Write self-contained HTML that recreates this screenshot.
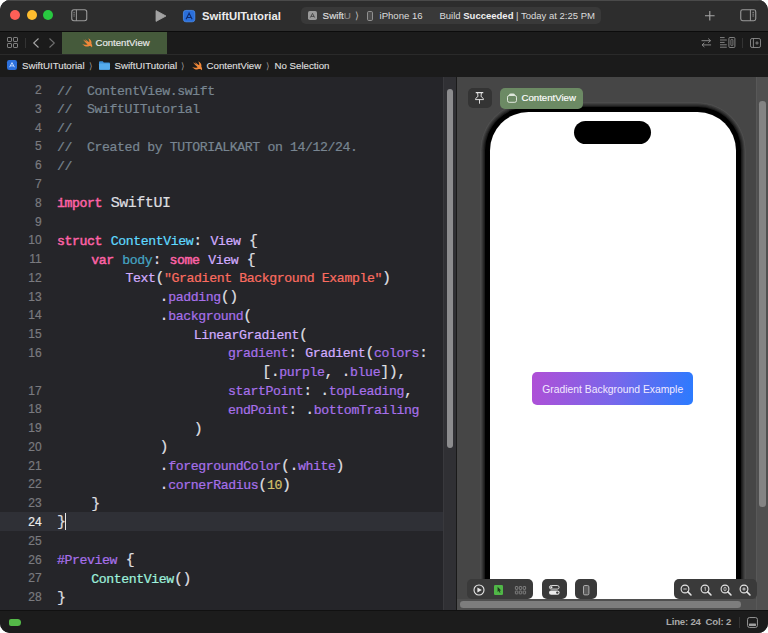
<!DOCTYPE html>
<html>
<head>
<meta charset="utf-8">
<title>Xcode</title>
<style>
html,body{margin:0;padding:0;background:#fff;}
body{width:768px;height:633px;overflow:hidden;position:relative;font-family:"Liberation Sans",sans-serif;}
#win{position:absolute;left:0;top:0;width:768px;height:633px;border-radius:10px;overflow:hidden;background:#1c1c1c;}
.abs{position:absolute;}
#titlebar{left:0;top:0;width:768px;height:31px;background:#2d2d2d;border-top:1px solid #4a4a4a;box-sizing:border-box;}
#tabbar{left:0;top:31px;width:768px;height:23px;background:#1b1b1b;border-top:1.4px solid #0c0c0c;box-sizing:border-box;}
#crumbs{left:0;top:54px;width:768px;height:23px;background:#1b1b1b;border-top:1px solid #2a2a2a;box-sizing:border-box;z-index:2;}
.t{z-index:3;}svg{z-index:3;}
#editor{left:0;top:77px;width:443px;height:533px;background:#252529;overflow:hidden;}
#scrolltrack{left:443px;top:77px;width:13px;height:533px;background:#303034;border-left:1px solid #39393d;box-sizing:border-box;}
#divider{left:456px;top:77px;width:1px;height:533px;background:#1a1a1a;}
#preview{left:457px;top:77px;width:311px;height:533px;background:#464646;overflow:hidden;}
#statusbar{left:0;top:610px;width:768px;height:23px;background:#1c1c1c;border-top:1px solid #111;box-sizing:border-box;}
.t{position:absolute;white-space:pre;color:#dcdcdc;font-size:10px;line-height:12px;}
.dot{position:absolute;width:10px;height:10px;border-radius:50%;top:10.4px;}
svg{position:absolute;overflow:visible;}
/* code */
.ln,.cl{position:absolute;white-space:pre;font-family:"Liberation Mono",monospace;font-size:15px;letter-spacing:-0.45px;line-height:19px;height:19px;color:#dfdfe0;}
.ln{left:0;margin-top:0.6px;width:41.7px;text-align:right;color:#7a7a7f;-webkit-text-stroke:0.2px #7a7a7f;font-family:"Liberation Sans",sans-serif;font-size:12px;letter-spacing:0;}
.ln.cur{color:#ececec;-webkit-text-stroke:0.2px #ececec;}
.cl{left:57px;margin-top:1px;}
.cl span{font-size:13.2px;letter-spacing:-0.4px;}
.cl,.cl span{-webkit-text-stroke:0.22px currentColor;}
.c{color:#788591}.cl .k{color:#fc62a5;-webkit-text-stroke:0.5px #fc62a5}.s{color:#fc6c60}.td{color:#5fd9ff}.od{color:#45a6c4}.oc{color:#d2acff}.of{color:#a770ea}.pt{color:#9ef1dd}.n{color:#d3c26c}
</style>
</head>
<body>
<div id="win">
  <!-- ===== title bar ===== -->
  <div id="titlebar" class="abs"></div>
  <div class="dot" style="left:10.4px;background:#fe5f57;"></div>
  <div class="dot" style="left:26.9px;background:#febc2e;"></div>
  <div class="dot" style="left:43.2px;background:#28c840;"></div>
  <!-- sidebar toggle -->
  <svg style="left:71px;top:9px" width="17" height="13" viewBox="0 0 17 13"><rect x="0.75" y="0.75" width="15" height="11" rx="2.2" fill="none" stroke="#9b9b9b" stroke-width="1.1"/><line x1="5.4" y1="0.8" x2="5.4" y2="11.8" stroke="#9b9b9b" stroke-width="1"/><line x1="2.4" y1="3.4" x2="3.8" y2="3.4" stroke="#9b9b9b" stroke-width="0.8"/><line x1="2.4" y1="5.2" x2="3.8" y2="5.2" stroke="#9b9b9b" stroke-width="0.8"/><line x1="2.4" y1="7" x2="3.8" y2="7" stroke="#9b9b9b" stroke-width="0.8"/></svg>
  <!-- play -->
  <svg style="left:155px;top:10px" width="12" height="12" viewBox="0 0 12 12"><path d="M1 0.6 L11 6 L1 11.4 Z" fill="#a2a2a2" stroke="#a2a2a2" stroke-width="0.8" stroke-linejoin="round"/></svg>
  <!-- app icon -->
  <svg style="left:183.4px;top:9.5px" width="12.2" height="12.2" viewBox="0 0 12 12"><rect x="0.4" y="0.4" width="11.2" height="11.2" rx="2.4" fill="#2a6fdc" stroke="#4b8ff0" stroke-width="0.8"/><path d="M3 9 L6 3.2 L9 9 M3.4 7.4 H8.6 M6 2.4 V3.6" fill="none" stroke="#0e2c6e" stroke-width="1.1"/></svg>
  <div class="t" style="left:202px;top:10px;font-size:11.3px;font-weight:bold;color:#ececec;">SwiftUITutorial</div>
  <!-- scheme pill -->
  <div class="abs" style="left:300.8px;top:6.5px;width:300.5px;height:17.9px;border-radius:5px;background:#393939;"></div>
  <svg style="left:308px;top:11px" width="9" height="9" viewBox="0 0 9 9"><rect width="9" height="9" rx="1.8" fill="#9a9a9a"/><path d="M2.3 6.6 L4.5 2.4 L6.7 6.6 M3 5.4 H6" fill="none" stroke="#383838" stroke-width="0.8"/></svg>
  <div class="t" style="left:322.6px;top:10px;font-size:9.8px;color:#dcdcdc;-webkit-text-stroke:0.2px currentColor;">Swift<span style="color:#8a8a8a">U</span></div>
  <div class="t" style="left:354.5px;top:9.5px;font-size:9.5px;color:#bdbdbd;">⟩</div>
  <svg style="left:367px;top:11px" width="6" height="10" viewBox="0 0 6 10"><rect x="0.5" y="0.5" width="5" height="9" rx="1.2" fill="#4c4c4c" stroke="#9a9a9a" stroke-width="0.9"/></svg>
  <div class="t" style="left:379.5px;top:10px;font-size:9.6px;color:#dcdcdc;">iPhone 16</div>
  <div class="t" style="left:439.5px;top:10px;font-size:9.5px;color:#dcdcdc;">Build <b style="color:#f0f0f0">Succeeded</b> | Today at 2:25 PM</div>
  <!-- plus / inspector -->
  <svg style="left:705.4px;top:10.8px" width="9.6" height="9.6" viewBox="0 0 9.6 9.6"><path d="M4.8 0 V9.6 M0 4.8 H9.6" stroke="#a6a6a6" stroke-width="1.1" fill="none"/></svg>
  <svg style="left:739.6px;top:9px" width="17" height="13" viewBox="0 0 17 13"><rect x="0.75" y="0.75" width="15" height="11" rx="1.9" fill="none" stroke="#9b9b9b" stroke-width="1.1"/><line x1="10.4" y1="0.8" x2="10.4" y2="11.8" stroke="#9b9b9b" stroke-width="1"/><line x1="12.4" y1="3.4" x2="14" y2="3.4" stroke="#9b9b9b" stroke-width="0.8"/><line x1="12.4" y1="5.2" x2="14" y2="5.2" stroke="#9b9b9b" stroke-width="0.8"/><line x1="12.4" y1="7" x2="14" y2="7" stroke="#9b9b9b" stroke-width="0.8"/></svg>

  <!-- ===== tab bar ===== -->
  <div id="tabbar" class="abs"></div>
  <svg style="left:7px;top:37px" width="11" height="11" viewBox="0 0 11 11" fill="none" stroke="#8d8d8d" stroke-width="0.9"><rect x="0.5" y="0.5" width="4" height="4" rx="0.6"/><rect x="6.5" y="0.5" width="4" height="4" rx="0.6"/><rect x="0.5" y="6.5" width="4" height="4" rx="0.6"/><rect x="6.5" y="6.5" width="4" height="4" rx="0.6"/></svg>
  <div class="abs" style="left:25px;top:38px;width:1px;height:10px;background:#333;"></div>
  <svg style="left:33px;top:38px" width="6" height="10" viewBox="0 0 6 10"><path d="M5.5 0.5 L0.7 5 L5.5 9.5" fill="none" stroke="#a5a5a5" stroke-width="1.1"/></svg>
  <svg style="left:49px;top:38px" width="6" height="10" viewBox="0 0 6 10"><path d="M0.5 0.5 L5.3 5 L0.5 9.5" fill="none" stroke="#6f6f6f" stroke-width="1.1"/></svg>
  <div class="abs" style="left:62px;top:32px;width:105px;height:22px;background:#455a3b;"></div>
  <svg style="left:81.8px;top:38.4px" width="10.6" height="10.6" viewBox="0 0 10 10"><path d="M0.2 5.7 C2 7.9 4.7 8.7 6.5 7.7 C7.6 7.2 8.7 7.7 9.4 8.9 C10.1 7.4 9.4 6.1 8.9 5.4 C9.5 3.2 8.1 1.2 5.9 0.2 C6.9 1.7 7.1 3 6.8 4 C5.4 3.2 3.6 1.8 2.4 0.7 C3.2 2 3.9 2.8 4.6 3.6 C3.4 2.9 2.2 2.1 1.1 1.3 C2.3 3.2 3.8 4.8 5.4 5.9 C3.8 6.7 1.8 6.5 0.2 5.7 Z" fill="#f0883a"/></svg>
  <div class="t" style="left:95.5px;top:37px;font-size:9.6px;color:#ececec;-webkit-text-stroke:0.15px #ececec;">ContentView</div>
  <!-- right icons of tab bar -->
  <svg style="left:700.8px;top:38.3px" width="10.6" height="9.6" viewBox="0 0 10 9" fill="none" stroke="#8d8d8d" stroke-width="0.9"><path d="M0.5 2.5 H9 M6.8 0.5 L9 2.5 L6.8 4.5"/><path d="M9.5 6.5 H1 M3.2 4.5 L1 6.5 L3.2 8.5"/></svg>
  <svg style="left:719.5px;top:37.2px" width="15.4" height="11" viewBox="0 0 15.4 11" fill="none" stroke="#8d8d8d" stroke-width="0.9"><path d="M0 0.6 H4.6 M0 3 H6.8 M0 5.4 H4.6 M0 7.8 H6.8 M0 10.2 H6.8"/><rect x="8.9" y="0.5" width="6" height="10" rx="1"/><rect x="10.9" y="2.4" width="2" height="6.2" rx="0.5" stroke-width="0.8"/></svg>
  <div class="abs" style="left:742px;top:38px;width:1px;height:10px;background:#333;"></div>
  <svg style="left:750px;top:38px" width="11" height="10" viewBox="0 0 11 10" fill="none" stroke="#8d8d8d" stroke-width="0.9"><rect x="0.5" y="0.5" width="10" height="9" rx="1.6"/><path d="M3.4 0.5 V9.5 M5.3 5 H8.7 M7 3.3 V6.7"/></svg>

  <!-- ===== breadcrumbs ===== -->
  <div id="crumbs" class="abs"></div>
  <svg style="left:7px;top:60px" width="10" height="10" viewBox="0 0 10 10"><rect width="10" height="10" rx="2.2" fill="#2c70dc"/><path d="M2.6 7.2 L5 2.6 L7.4 7.2 M3.4 5.9 H6.6" fill="none" stroke="#cfe2ff" stroke-width="0.9"/></svg>
  <div class="t" style="left:22px;top:60px;font-size:9.7px;color:#dedede;-webkit-text-stroke:0.15px #dedede;">SwiftUITutorial</div>
  <div class="t" style="left:89px;top:59.5px;font-size:9.3px;color:#9a9a9a;">⟩</div>
  <svg style="left:99px;top:61px" width="11" height="9" viewBox="0 0 11 9"><path d="M0 1.2 Q0 0.2 1 0.2 H3.8 L4.8 1.4 H10 Q11 1.4 11 2.4 V7.8 Q11 8.8 10 8.8 H1 Q0 8.8 0 7.8 Z" fill="#3a8ed6"/><rect x="0" y="2.6" width="11" height="6.2" rx="1" fill="#55abec"/></svg>
  <div class="t" style="left:114.5px;top:60px;font-size:9.7px;color:#dedede;-webkit-text-stroke:0.15px #dedede;">SwiftUITutorial</div>
  <div class="t" style="left:181.3px;top:59.5px;font-size:9.3px;color:#9a9a9a;">⟩</div>
  <svg style="left:191.9px;top:60.8px" width="10.5" height="10.5" viewBox="0 0 10 10"><path d="M0.2 5.7 C2 7.9 4.7 8.7 6.5 7.7 C7.6 7.2 8.7 7.7 9.4 8.9 C10.1 7.4 9.4 6.1 8.9 5.4 C9.5 3.2 8.1 1.2 5.9 0.2 C6.9 1.7 7.1 3 6.8 4 C5.4 3.2 3.6 1.8 2.4 0.7 C3.2 2 3.9 2.8 4.6 3.6 C3.4 2.9 2.2 2.1 1.1 1.3 C2.3 3.2 3.8 4.8 5.4 5.9 C3.8 6.7 1.8 6.5 0.2 5.7 Z" fill="#f0883a"/></svg>
  <div class="t" style="left:206.5px;top:60px;font-size:9.7px;color:#dedede;-webkit-text-stroke:0.15px #dedede;">ContentView</div>
  <div class="t" style="left:265.6px;top:59.5px;font-size:9.3px;color:#9a9a9a;">⟩</div>
  <div class="t" style="left:274.5px;top:60px;font-size:9.7px;color:#dedede;-webkit-text-stroke:0.15px #dedede;">No Selection</div>

  <!-- ===== editor ===== -->
  <div id="editor" class="abs">
    <div class="abs" style="left:0;top:434.9px;width:443px;height:18.7px;background:#2f3036;"></div>
<div class="ln" style="top:3.50px">2</div>
<div class="cl" style="top:3.50px"><span class="c">//  ContentView.swift</span></div>
<div class="ln" style="top:22.28px">3</div>
<div class="cl" style="top:22.28px"><span class="c">//  SwiftUITutorial</span></div>
<div class="ln" style="top:41.06px">4</div>
<div class="cl" style="top:41.06px"><span class="c">//</span></div>
<div class="ln" style="top:59.84px">5</div>
<div class="cl" style="top:59.84px"><span class="c">//  Created by TUTORIALKART on 14/12/24.</span></div>
<div class="ln" style="top:78.62px">6</div>
<div class="cl" style="top:78.62px"><span class="c">//</span></div>
<div class="ln" style="top:97.40px">7</div>
<div class="ln" style="top:116.18px">8</div>
<div class="cl" style="top:116.18px"><span class="k">import</span> SwiftUI</div>
<div class="ln" style="top:134.96px">9</div>
<div class="ln" style="top:153.74px">10</div>
<div class="cl" style="top:153.74px"><span class="k">struct</span> <span class="td">ContentView</span>: <span class="oc">View</span> {</div>
<div class="ln" style="top:172.52px">11</div>
<div class="cl" style="top:172.52px">    <span class="k">var</span> <span class="od">body</span>: <span class="k">some</span> <span class="oc">View</span> {</div>
<div class="ln" style="top:191.30px">12</div>
<div class="cl" style="top:191.30px">        <span class="oc">Text</span>(<span class="s">"Gradient Background Example"</span>)</div>
<div class="ln" style="top:210.08px">13</div>
<div class="cl" style="top:210.08px">            .<span class="of">padding</span>()</div>
<div class="ln" style="top:228.86px">14</div>
<div class="cl" style="top:228.86px">            .<span class="of">background</span>(</div>
<div class="ln" style="top:247.64px">15</div>
<div class="cl" style="top:247.64px">                <span class="oc">LinearGradient</span>(</div>
<div class="ln" style="top:266.42px">16</div>
<div class="cl" style="top:266.42px">                    <span class="of">gradient</span>: <span class="oc">Gradient</span>(<span class="of">colors</span>:</div>
<div class="cl" style="top:285.20px">                        [.<span class="of">purple</span>, .<span class="of">blue</span>]),</div>
<div class="ln" style="top:303.98px">17</div>
<div class="cl" style="top:303.98px">                    <span class="of">startPoint</span>: .<span class="of">topLeading</span>,</div>
<div class="ln" style="top:322.76px">18</div>
<div class="cl" style="top:322.76px">                    <span class="of">endPoint</span>: .<span class="of">bottomTrailing</span></div>
<div class="ln" style="top:341.54px">19</div>
<div class="cl" style="top:341.54px">                )</div>
<div class="ln" style="top:360.32px">20</div>
<div class="cl" style="top:360.32px">            )</div>
<div class="ln" style="top:379.10px">21</div>
<div class="cl" style="top:379.10px">            .<span class="of">foregroundColor</span>(.<span class="of">white</span>)</div>
<div class="ln" style="top:397.88px">22</div>
<div class="cl" style="top:397.88px">            .<span class="of">cornerRadius</span>(<span class="n">10</span>)</div>
<div class="ln" style="top:416.66px">23</div>
<div class="cl" style="top:416.66px">    }</div>
<div class="ln cur" style="top:435.44px">24</div>
<div class="cl" style="top:435.44px">}</div>
<div class="ln" style="top:454.22px">25</div>
<div class="ln" style="top:473.00px">26</div>
<div class="cl" style="top:473.00px"><span class="of">#Preview</span> {</div>
<div class="ln" style="top:491.78px">27</div>
<div class="cl" style="top:491.78px">    <span class="pt">ContentView</span>()</div>
<div class="ln" style="top:510.56px">28</div>
<div class="cl" style="top:510.56px">}</div>
    <div class="abs" style="left:64.5px;top:435.5px;width:1.2px;height:17px;background:#e8e8e8;"></div>
  </div>
  <div id="scrolltrack" class="abs"></div>
  <div class="abs" style="left:446.8px;top:89px;width:6.6px;height:359px;border-radius:3.3px;background:#8c8c8e;"></div>
  <div id="divider" class="abs"></div>

  <!-- ===== preview ===== -->
  <div id="preview" class="abs">
    <!-- phone -->
    <div class="abs" style="left:28.1px;top:29.7px;width:256.1px;height:600px;border-radius:43.5px;background:#000;box-shadow:0 0 0 1.1px #1b1b1b, 0 0 0 2.2px #2b2b2b, 0 0 0 3.2px #3a3a3a, 0 0 0 3.9px #454545, 0 0 0 4.5px #525252;"></div>
    <div class="abs" style="left:33.1px;top:35px;width:245.8px;height:590px;border-radius:38.5px;background:#fff;"></div>
    <div class="abs" style="left:117.3px;top:43.7px;width:77px;height:23px;border-radius:11.5px;background:#000;"></div>
    <!-- gradient label -->
    <div class="abs" style="left:75px;top:295.4px;width:161px;height:32.4px;border-radius:5px;background:linear-gradient(100deg,#b04fd6 0%,#7a66ea 50%,#2a7bff 100%);"></div>
    <div class="t" style="left:85.3px;top:306.5px;font-size:10.35px;color:#f2eaff;">Gradient Background Example</div>
    <!-- right vertical scrollbar -->
    <div class="abs" style="left:299px;top:0;width:12px;height:533px;background:#505050;border-left:1px solid #585858;box-sizing:border-box;"></div>
    <div class="abs" style="left:302px;top:24px;width:6.6px;height:406px;border-radius:3.3px;background:#848484;"></div>
    <!-- horizontal scrollbar -->
    <div class="abs" style="left:0;top:522px;width:299px;height:11px;background:#4f4f4f;"></div>
    <div class="abs" style="left:3px;top:524.4px;width:281px;height:6.6px;border-radius:3.3px;background:#7d7d7d;"></div>
    <!-- pin + ContentView chip -->
    <div class="abs" style="left:10.5px;top:11.3px;width:24px;height:19.6px;border-radius:5px;background:#343434;"></div>
    <svg style="left:18.2px;top:15.2px" width="9" height="12" viewBox="0 0 9 12" fill="none" stroke="#e6e6e6" stroke-width="0.95"><path d="M1.2 0.7 H7.8" stroke-width="1.2" stroke-linecap="round"/><path d="M2.6 0.9 L3 4.5 C1.6 5.2 0.6 6.3 0.5 7.6 H8.5 C8.4 6.3 7.4 5.2 6 4.5 L6.4 0.9 M4.5 7.6 V11.7"/></svg>
    <div class="abs" style="left:43.3px;top:10.5px;width:82.8px;height:21.2px;border-radius:5px;background:#6c8a64;"></div>
    <svg style="left:50px;top:16px" width="10" height="9.8" viewBox="0 0 10 9.8" fill="none" stroke="#eef3ec" stroke-width="0.9"><rect x="0.5" y="2.5" width="9" height="6.8" rx="1.7"/><path d="M1.9 2.5 Q1.9 0.4 3.6 0.4 H6.4 Q8.1 0.4 8.1 2.5 Z" fill="#dfe8dc" stroke="none"/></svg>
    <div class="t" style="left:64.5px;top:15.4px;font-size:9.65px;color:#fff;-webkit-text-stroke:0.15px #fff;">ContentView</div>
    <!-- bottom toolbar -->
    <div class="abs" style="left:10px;top:502.3px;width:66px;height:19.5px;border-radius:5px;background:#3a3a3a;"></div>
    <div class="abs" style="left:85px;top:502.3px;width:24.6px;height:19.5px;border-radius:5px;background:#3a3a3a;"></div>
    <div class="abs" style="left:118px;top:502.3px;width:22px;height:19.5px;border-radius:5px;background:#3a3a3a;"></div>
    <div class="abs" style="left:217px;top:502.3px;width:83px;height:19.5px;border-radius:5px;background:#3a3a3a;"></div>
    <svg style="left:16px;top:507px" width="12" height="12" viewBox="-6 -6 12 12"><circle r="5" fill="none" stroke="#e8e8e8" stroke-width="1.1"/><path d="M-1.6 -2.5 L2.8 0 L-1.6 2.5 Z" fill="#e8e8e8"/></svg>
    <div class="abs" style="left:36.8px;top:508.3px;width:9.6px;height:9.4px;border-radius:1.2px;background:#50b747;"></div>
    <svg style="left:36.8px;top:508.3px" width="9.6" height="9.4" viewBox="0 0 9.6 9.4"><path d="M3.6 1.8 V7 L4.8 5.9 L5.7 7.8 L6.5 7.4 L5.6 5.6 H7.2 Z" fill="#1f3a1c"/></svg>
    <svg style="left:58px;top:508.6px" width="11" height="9" viewBox="0 0 11 9" fill="none" stroke="#8e8e8e" stroke-width="0.8"><rect x="0.4" y="0.5" width="2.4" height="2.9" rx="0.4"/><rect x="4.3" y="0.5" width="2.4" height="2.9" rx="0.4"/><rect x="8.2" y="0.5" width="2.4" height="2.9" rx="0.4"/><rect x="0.4" y="5.0" width="2.4" height="2.9" rx="0.4"/><rect x="4.3" y="5.0" width="2.4" height="2.9" rx="0.4"/><rect x="8.2" y="5.0" width="2.4" height="2.9" rx="0.4"/></svg>
    <svg style="left:92.1px;top:508.3px" width="10.6" height="9.8" viewBox="0 0 10.6 9.8"><rect x="0.5" y="0.5" width="9.6" height="3.6" rx="1.8" fill="none" stroke="#ececec" stroke-width="0.9"/><circle cx="2.4" cy="2.3" r="1.1" fill="#ececec"/><rect x="0" y="5.4" width="10.6" height="4.4" rx="2.2" fill="#ececec"/><circle cx="8.3" cy="7.6" r="1.2" fill="#3a3a3a"/></svg>
    <svg style="left:126.2px;top:507.8px" width="6.4" height="10.4" viewBox="0 0 6.4 10.4"><rect x="0.5" y="0.5" width="5.4" height="9.4" rx="1.3" fill="#5a5a5a" stroke="#b9b9b9" stroke-width="0.9"/></svg>
    <svg style="left:223.4px;top:506.7px" width="12" height="12" viewBox="-5 -5 12 12" fill="none" stroke="#e6e6e6"><circle cx="0" cy="0" r="3.9" stroke-width="1.1"/><path d="M2.9 2.9 L6 6" stroke-width="1.5" stroke-linecap="round"/><path d="M-1.7 0 H1.7" stroke-width="0.8"/></svg>
    <svg style="left:243.0px;top:506.7px" width="12" height="12" viewBox="-5 -5 12 12" fill="none" stroke="#e6e6e6"><circle cx="0" cy="0" r="3.9" stroke-width="1.1"/><path d="M2.9 2.9 L6 6" stroke-width="1.5" stroke-linecap="round"/><path d="M-0.6 -1.1 L0.3 -1.8 V1.8" stroke-width="0.7"/></svg>
    <svg style="left:262.6px;top:506.7px" width="12" height="12" viewBox="-5 -5 12 12" fill="none" stroke="#e6e6e6"><circle cx="0" cy="0" r="3.9" stroke-width="1.1"/><path d="M2.9 2.9 L6 6" stroke-width="1.5" stroke-linecap="round"/><rect x="-1" y="-1.7" width="2" height="3.4" rx="0.9" stroke-width="0.7"/></svg>
    <svg style="left:282.4px;top:506.7px" width="12" height="12" viewBox="-5 -5 12 12" fill="none" stroke="#e6e6e6"><circle cx="0" cy="0" r="3.9" stroke-width="1.1"/><path d="M2.9 2.9 L6 6" stroke-width="1.5" stroke-linecap="round"/><path d="M-1.7 0 H1.7 M0 -1.7 V1.7" stroke-width="0.8"/></svg>
  </div>

  <!-- ===== status bar ===== -->
  <div id="statusbar" class="abs"></div>
  <div class="abs" style="left:9px;top:618.5px;width:12px;height:7px;border-radius:2px 3.5px 3.5px 2px;background:#54b948;"></div>
  <div class="t" style="left:666px;top:616px;font-size:9.6px;color:#a9a9a9;font-weight:bold;letter-spacing:-0.2px;">Line: 24  Col: 2</div>
  <div class="abs" style="left:739px;top:617px;width:1px;height:11px;background:#333;"></div>
  <svg style="left:747px;top:616.5px" width="11" height="11" viewBox="0 0 12 12"><rect x="0.6" y="0.6" width="10.8" height="10.8" rx="2.2" fill="none" stroke="#a0a0a0" stroke-width="1"/><rect x="2.2" y="7.2" width="7.6" height="2.6" rx="0.6" fill="#a0a0a0"/></svg>
</div>
</body>
</html>
